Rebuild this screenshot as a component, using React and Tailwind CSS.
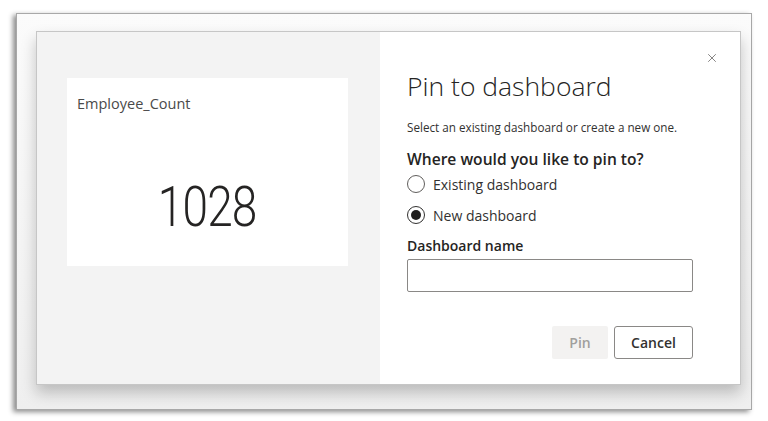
import { X } from 'lucide-react'

export default function App() {
  return (
    <div className="w-[768px] h-[421px] bg-white pt-[13px] pl-[16px] font-['Open_Sans',sans-serif]">
      {/* outer window frame */}
      <div className="w-[736px] h-[397px] border border-[#a8a8a8] bg-gradient-to-b from-[#fbfbfb] to-[#efefef] shadow-[-3px_2px_5px_rgba(0,0,0,0.45)] pt-[17px] pl-[19px]">
        {/* dialog */}
        <div className="flex w-[705px] h-[354px] border border-[#c6c6c6] shadow-[0_8px_14px_rgba(0,0,0,0.22)]">
          {/* preview */}
          <div className="w-[343px] h-full bg-[#f3f3f3] pt-[46px] pl-[30px]">
            <div className="w-[281px] h-[188px] bg-white flex flex-col">
              <div className="pl-[10px] pt-[16px] text-[14.5px] leading-[20px] text-[#4a4a4a]">Employee_Count</div>
              <div className="flex-1 flex items-center justify-center pt-[34px]">
                <span className="font-['Roboto',sans-serif] font-light text-[56px] leading-none text-[#252423] inline-block scale-x-[0.82] tracking-[-1px]">1028</span>
              </div>
            </div>
          </div>
          {/* form */}
          <div className="relative flex-1 bg-white pl-[27px] pt-[37px] text-[#323130]">
            <button className="absolute top-[19px] right-[21px] text-[#605e5c]">
              <X size={14} strokeWidth={1.3} />
            </button>
            <h2 className="text-[26.5px] leading-[34px] font-light text-[#252423]">Pin to dashboard</h2>
            <p className="mt-[16px] text-[11.7px] leading-[16px]">Select an existing dashboard or create a new one.</p>
            <p className="mt-[14px] text-[15.6px] leading-[20px] font-semibold text-[#252423]">Where would you like to pin to?</p>
            <label className="mt-[5px] h-[20px] flex items-center gap-[8px] text-[14px]">
              <span className="w-[18px] h-[18px] rounded-full border border-[#605e5c] bg-white" />
              Existing dashboard
            </label>
            <label className="mt-[11px] h-[20px] flex items-center gap-[8px] text-[14px]">
              <span className="w-[18px] h-[18px] rounded-full border border-[#323130] bg-white flex items-center justify-center">
                <span className="w-[10px] h-[10px] rounded-full bg-[#201f1e]" />
              </span>
              New dashboard
            </label>
            <p className="mt-[11px] text-[14px] leading-[20px] font-semibold text-[#252423]">Dashboard name</p>
            <input className="mt-[3px] block w-[286px] h-[33px] border border-[#8a8886] rounded-[2px] px-2 text-[14px] outline-none" />
            <div className="mt-[34px] flex justify-end gap-[6px] pr-[47px]">
              <button className="w-[56px] h-[33px] rounded-[2px] bg-[#f3f2f1] text-[14px] font-semibold text-[#a19f9d]">Pin</button>
              <button className="w-[79px] h-[33px] rounded-[3px] border border-[#8a8886] bg-white text-[14px] font-semibold text-[#323130]">Cancel</button>
            </div>
          </div>
        </div>
      </div>
    </div>
  )
}
